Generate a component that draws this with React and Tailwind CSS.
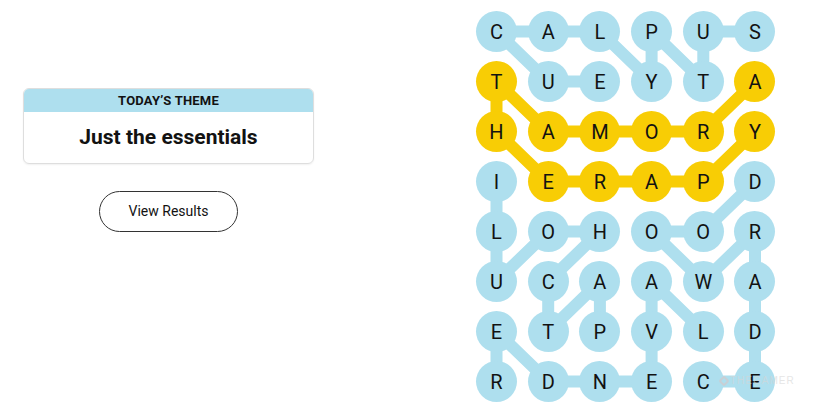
import React from 'react'

// Board letters, row by row
const ROWS = [
  'CALPUS',
  'TUEYTA',
  'HAMORY',
  'IERAPD',
  'LOHOOR',
  'UCAAWA',
  'ETPVLD',
  'RDNECE',
]

// Found words as [row, col] paths
const WORDS = [
  { spangram: false, path: [[1, 2], [1, 1], [0, 0], [0, 1], [0, 2], [1, 3], [0, 3], [1, 4], [0, 4], [0, 5]] }, // EUCALYPTUS
  { spangram: true, path: [[1, 5], [2, 4], [2, 3], [2, 2], [2, 1], [1, 0], [2, 0], [3, 1], [3, 2], [3, 3], [3, 4], [2, 5]] }, // AROMATHERAPY
  { spangram: false, path: [[6, 2], [5, 2], [6, 1], [5, 1], [4, 2], [4, 1], [5, 0], [4, 0], [3, 0]] }, // PATCHOULI
  { spangram: false, path: [[7, 4], [7, 5], [6, 5], [5, 5], [4, 5], [5, 4], [4, 3], [4, 4], [3, 5]] }, // CEDARWOOD
  { spangram: false, path: [[6, 4], [5, 3], [6, 3], [7, 3], [7, 2], [7, 1], [6, 0], [7, 0]] }, // LAVENDER
]

const BLUE = '#aedfee'
const GOLD = '#f8cd05'

const cx = c => 20.5 + c * 51.7
const cy = r => 20.5 + r * 50

const spangramCells = new Set(WORDS.find(w => w.spangram).path.map(([r, c]) => `${r}-${c}`))

function Board() {
  return (
    <div className="relative w-[300px] h-[392px]">
      {/* connectors */}
      <svg className="absolute inset-0" width="300" height="392">
        {WORDS.map((w, i) => (
          <polyline
            key={i}
            points={w.path.map(([r, c]) => `${cx(c)},${cy(r)}`).join(' ')}
            fill="none"
            stroke={w.spangram ? GOLD : BLUE}
            strokeWidth="12"
            strokeLinejoin="round"
          />
        ))}
      </svg>
      <div className="relative grid grid-cols-[repeat(6,41px)] gap-x-[10.7px] gap-y-[9px]">
        {ROWS.map((row, r) =>
          row.split('').map((ch, c) => (
            <div
              key={`${r}-${c}`}
              className={[
                'w-[41px] h-[41px] rounded-full flex items-center justify-center text-[20px] text-[#121212] leading-none',
                spangramCells.has(`${r}-${c}`) ? 'bg-[#f8cd05]' : 'bg-[#aedfee]',
              ].join(' ')}
            >
              {ch}
            </div>
          ))
        )}
      </div>
    </div>
  )
}

export default function App() {
  return (
    <div className="relative w-[825px] h-[418px] bg-white flex font-['Roboto',_'Liberation_Sans',_sans-serif] overflow-hidden">
      {/* Theme panel */}
      <div className="w-[337px] px-[23px] pt-[88px] flex flex-col items-center">
        <div className="w-full rounded-md border border-[#dedede] overflow-hidden shadow-[0_1px_2px_rgba(0,0,0,0.06)]">
          <div className="h-[23px] bg-[#aedfee] flex items-center justify-center text-[13px] font-bold tracking-[0.2px] text-[#121212]">
            TODAY’S THEME
          </div>
          <div className="h-[51px] flex items-center justify-center text-[21px] font-bold text-[#121212]">
            Just the essentials
          </div>
        </div>
        <button
          type="button"
          className="mt-[27px] w-[139px] h-[41px] rounded-full border border-[#333] text-[14px] text-[#121212] bg-white"
        >
          View Results
        </button>
      </div>

      {/* Board */}
      <div className="ml-[139px] mt-[11px]">
        <Board />
      </div>

      {/* watermark */}
      <div className="absolute left-[720px] top-[373px] flex items-center gap-[2px] opacity-60">
        <span className="w-[8px] h-[8px] rotate-45 border-2 border-[#d9c6c6] rounded-[2px]" />
        <span className="text-[10px] tracking-[1px] text-[#d6d6d6] font-['Liberation_Sans',_sans-serif]">THEGAMER</span>
      </div>
    </div>
  )
}
